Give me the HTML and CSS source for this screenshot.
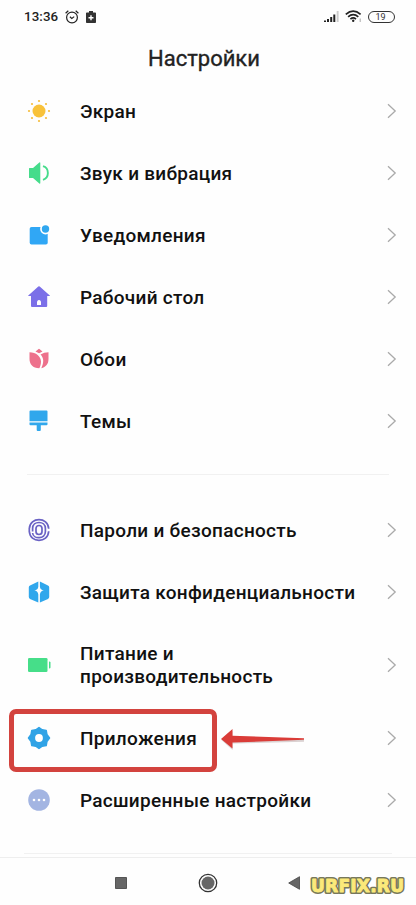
FILE: index.html
```html
<!DOCTYPE html>
<html lang="ru">
<head>
<meta charset="utf-8">
<title>Настройки</title>
<link rel="stylesheet" href="styles.css">
</head>
<body>
<svg width="0" height="0" class="defs"><symbol id="chev" viewBox="0 0 10 16"><path d="M1 1.300 8.200 8 1 14.700" fill="none" stroke="#aaa" stroke-width="1.300"/></symbol></svg>
<div class="phone">
  <header class="status">
    <span class="time">13:36</span>
    <svg class="alarm" width="14" height="14" viewBox="0 0 14 14" fill="none" stroke="#222" stroke-width="1.2"><circle cx="7" cy="7.5" r="5.4"/><path d="M.6 3.3 3.3.8M13.4 3.3 10.7.8M4.9 6.8 6.8 8.5 9.2 6.6"/></svg>
    <svg class="saver" width="10" height="12" viewBox="0 0 10 12"><path d="M3 0h4v1.5h2.2q.8 0 .8.8v8.9q0 .8-.8.8H.8q-.8 0-.8-.8V2.300q0-.8.8-.8H3z" fill="#333"/><path d="M5 4.200v5M2.500 6.700h5" stroke="#fff" stroke-width="1.400"/></svg>
    <span class="space"></span>
    <svg class="signal" width="16" height="12" viewBox="0 0 16 12"><path d="M0 9.500h2V11H0zM3 8h2v3H3zM6.200 6h2v5h-2zM9.300 3.500h2V11h-2z" fill="#222"/><path d="M12.700 0h1.900v11h-1.900z" fill="#ccc"/></svg>
    <svg class="wifi" width="17" height="13" viewBox="0 0 17 13" fill="none" stroke="#222" stroke-width="1.700"><path d="M.8 4.300Q8.200-2.200 15.600 4.300M3.100 6.800q5.100-4.500 10.200 0M5.400 9.100q2.800-2.400 5.600 0"/><circle cx="8.200" cy="10.800" r="1.200" fill="#222" stroke="none"/><path d="M15.200 8.500v3.500" stroke="#aaa" stroke-width="1"/></svg>
    <span class="battery">19</span>
  </header>
  <h1>Настройки</h1>
  <main>
    <section class="group first">
      <div class="row"><svg class="icon" viewBox="0 0 24 24"><circle cx="12" cy="12" r="6.500" fill="#f8c23a"/><g fill="#f6bd3c"><circle cx="12" cy="2" r="1.100"/><circle cx="12" cy="22" r="1.100"/><circle cx="2" cy="12" r="1.100"/><circle cx="22" cy="12" r="1.100"/><circle cx="5" cy="5" r="1.100"/><circle cx="19" cy="5" r="1.100"/><circle cx="5" cy="19" r="1.100"/><circle cx="19" cy="19" r="1.100"/></g></svg><span class="label">Экран</span><svg class="chev"><use href="#chev"/></svg></div>
      <div class="row"><svg class="icon" viewBox="0 0 24 24"><path d="M2 7.500Q2 7 2.500 7H6l6.300-5.600q1-.7 1 .5v20.200q0 1.200-1 .5L6 17H2.500q-.5 0-.5-.5z" fill="#45dc8b"/><path d="M16 5.200c6.500 2 6.500 11.600 0 13.600" fill="none" stroke="#45dc8b" stroke-width="1.900"/></svg><span class="label">Звук и вибрация</span><svg class="chev"><use href="#chev"/></svg></div>
      <div class="row"><svg class="icon" viewBox="0 0 24 24"><rect x="2.700" y="4" width="18" height="17.500" rx="1.800" fill="#30a7f5"/><circle cx="18.500" cy="6" r="5.400" fill="#fff"/><circle cx="18.500" cy="6" r="3.700" fill="#30a7ef"/></svg><span class="label">Уведомления</span><svg class="chev"><use href="#chev"/></svg></div>
      <div class="row"><svg class="icon" viewBox="0 0 24 24"><path d="M11.300 1.500q.7-.6 1.400 0L22.800 10.500q.4.600-.3.600h-2.300v9.800q0 1-1 1H5q-1 0-1-1v-9.800H1.500q-.7 0-.2-.6z" fill="#7b6fe8"/><path d="M10 20v-3.500q2-2.800 4 0V20z" fill="#fff"/></svg><span class="label">Рабочий стол</span><svg class="chev"><use href="#chev"/></svg></div>
      <div class="row"><svg class="icon" viewBox="0 0 24 24"><path d="M2.500 5.200C9 5.200 14 9.500 14 14.500c0 3-.8 5-1.700 6.800C5.800 21.300 2.500 17 2.500 12zM13.500 7.500Q17 5.200 21.500 5.200V12c0 5-2.500 8-7.200 9.200C17.200 15 16.800 11 13.500 7.500zM8.500 4.500 11.600 2q.4-.3.800 0l3.100 2.500-3.400 1.800z" fill="#ed718c"/></svg><span class="label">Обои</span><svg class="chev"><use href="#chev"/></svg></div>
      <div class="row"><svg class="icon" viewBox="0 0 24 24"><path d="M3.500 1.500h16q1 0 1 1v9.700h-18V2.500q0-1 1-1zM2.500 13.500h18v1.800q0 1-1 1h-5.700V21q0 1-1 1h-2.100q-1 0-1-1v-4.700H3.500q-1 0-1-1z" fill="#30a7ec"/></svg><span class="label">Темы</span><svg class="chev"><use href="#chev"/></svg></div>
    </section>
    <hr>
    <section class="group">
      <div class="row"><svg class="icon" viewBox="0 0 24 24" fill="none" stroke="#6a62c4" stroke-width="1.700"><path d="M2.300 10.800c.6-12.200 18.800-12.200 19.400 0M21.700 13.200c-.6 12.200-18.800 12.200-19.400 0M2.300 10v4"/><path d="M5.600 13.500v-3c0-8 12.800-8 12.800 0M18.400 10.500v3c0 8-12.200 8-12.800 1.500"/><rect x="9" y="7.500" width="6" height="9" rx="3"/></svg><span class="label">Пароли и безопасность</span><svg class="chev"><use href="#chev"/></svg></div>
      <div class="row"><svg class="icon" viewBox="0 0 24 24"><path d="M11.300 1.400v5.300q-.3 3.200-4 3.600 3.700.7 4 4.300v8L3 18.900q-1.200-.7-1.200-1.800V7.200q0-1.100 1.200-1.800zM12.900 1.400v5.300q.3 3.200 4 3.600-3.700.7-4 4.300v8L21 18.900q1.200-.7 1.200-1.800V7.200q0-1.100-1.200-1.800z" fill="#30a7ec"/></svg><span class="label">Защита конфиденциальности</span><svg class="chev"><use href="#chev"/></svg></div>
      <div class="row tall"><svg class="icon" viewBox="0 0 24 24"><rect x="1" y="5" width="19.500" height="14" rx="1.300" fill="#46de89"/><path d="M22 8.500q1.500 0 1.500 1v5q0 1-1.500 1z" fill="#46de89"/></svg><span class="label">Питание и<br>производительность</span><svg class="chev"><use href="#chev"/></svg></div>
      <div class="row marked"><svg class="icon" viewBox="0 0 24 24"><path d="m12 1.500 3.200 2.300 4 .7.700 4L22.500 12l-2.600 3.500-.7 4-4 .7L12 22.500l-3.200-2.300-4-.7-.7-4L1.500 12l2.600-3.500.7-4 4-.7z" fill="#30a3e6" stroke="#30a3e6" stroke-width="1.500" stroke-linejoin="round"/><circle cx="12" cy="12" r="3.900" fill="#fff"/></svg><span class="label">Приложения</span><svg class="chev"><use href="#chev"/></svg>
        <svg class="arrow" width="86" height="23" viewBox="0 0 86 23"><path d="M1.500 12 12.500 3v6.500L84 11.800v2L12.500 15.500V22z" fill="#b8a5a5" opacity=".5"/><path d="M1 11 12.500 1v6.800L84 10.200v1.600l-71.500 2.800V20.500z" fill="#da3c38"/></svg></div>
      <div class="row"><svg class="icon" viewBox="0 0 24 24"><circle cx="12" cy="12" r="10.800" fill="#a3b5e2"/><g fill="#fff"><circle cx="7" cy="12" r="1.300"/><circle cx="12" cy="12" r="1.300"/><circle cx="17" cy="12" r="1.300"/></g></svg><span class="label">Расширенные настройки</span><svg class="chev"><use href="#chev"/></svg></div>
    </section>
    <hr class="last">
  </main>
  <nav>
    <svg width="12" height="12" viewBox="0 0 12 12"><path d="M.5.500h11v11H.5z" fill="#666" stroke="#555"/></svg>
    <svg width="20" height="20" viewBox="0 0 20 20"><circle cx="10" cy="10" r="8.700" fill="none" stroke="#333" stroke-width="1.300"/><circle cx="10" cy="10" r="6.500" fill="#666"/></svg>
    <svg width="12" height="14" viewBox="0 0 12 14"><path d="M.7 7 11.500.7v12.600z" fill="#666" stroke="#444" stroke-width=".8"/></svg>
  </nav>
  <div class="watermark"><svg width="102" height="24" viewBox="0 0 102 24"><text class="edge" x="5" y="18" textLength="93">URFIX.RU</text><text class="face" x="5" y="18" textLength="93">URFIX.RU</text></svg></div>
</div>
</body>
</html>
```
FILE: styles.css
```css
*, *::before { box-sizing: border-box; }
body { margin: 0; background: #fefefe; color: #111; font-family: Roboto, "Noto Sans", sans-serif; }
.defs { position: absolute; }
.phone { position: relative; width: 416px; height: 905px; overflow: hidden; display: flex; flex-direction: column; }
.status { height: 33px; flex: none; display: flex; align-items: center; padding: 0 21px 0 24px; }
.time { font-size: 13.3px; font-weight: 500; letter-spacing: .1px; color: #222; }
.alarm { margin-left: 7px; }
.saver { margin-left: 7px; }
.space { flex: 1; }
.signal { margin-right: 5px; }
.wifi { margin-right: 6px; }
.battery { width: 27px; height: 12px; border: 1.4px solid #333; border-radius: 6px; font-size: 9px; line-height: 10px; text-align: center; color: #333; padding-right: 2px; }
h1 { margin: 0; height: 48px; flex: none; padding-right: 8px; text-align: center; font-size: 22px; line-height: 51px; font-weight: 400; -webkit-text-stroke: .35px #222; color: #222; }
main { flex: none; height: 776px; }
.row { position: relative; display: flex; align-items: center; height: 62px; padding: 0 19px 0 27px; }
.first .row { height: 61.9px; }
.icon { width: 24px; height: 24px; flex: none; margin-right: 29px; }
.label { flex: 1; font-size: 19px; line-height: 23px; font-weight: 500; letter-spacing: .28px; color: #111; white-space: nowrap; }
.chev { width: 10px; height: 16px; flex: none; }
.first .icon, .first .chev { margin-bottom: 1.4px; }
.tall { height: 84px; }
hr { border: 0; border-top: 1px solid #f1f1f1; margin: 21.6px 27px 24.2px; }
.last { margin: 21.8px 24px 0; }
.marked::before { content: ""; position: absolute; left: 9px; top: 2px; width: 208px; height: 63px; border: 5px solid #d3433e; border-radius: 7px; }
.arrow { position: absolute; left: 220px; top: 21px; }
nav { flex: none; height: 48px; border-top: 1px solid #eee; display: flex; align-items: center; justify-content: space-between; padding: 3px 116px 0 115px; background: #fefefe; }
.watermark { position: absolute; left: 306px; top: 874px; height: 24px; }
.watermark text { font-family: "DejaVu Sans", sans-serif; font-size: 17px; font-weight: 700; stroke-linejoin: round; }
.edge { fill: #77785c; stroke: #77785c; stroke-width: 4px; }
.face { fill: #fbe97a; stroke: #fbe97a; stroke-width: .9px; }
```
